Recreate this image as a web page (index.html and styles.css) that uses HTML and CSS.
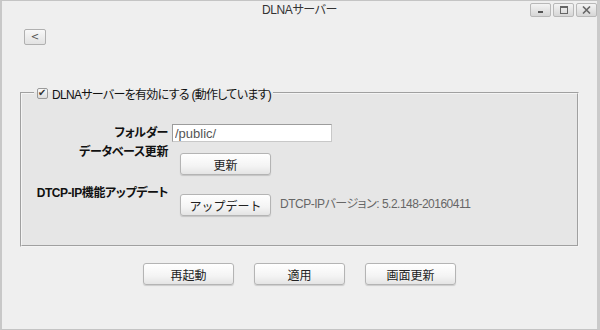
FILE: index.html
```html
<!DOCTYPE html>
<html lang="ja">
<head>
<meta charset="UTF-8">
<title>DLNAサーバー</title>
<link rel="stylesheet" href="styles.css">
</head>
<body>

<div class="window">
    <div class="titlebar">
        <span></span>
        <span class="title">DLNAサーバー</span>
        <div class="win-buttons">
            <button class="win-btn" title="最小化">
                <svg width="9" height="8" viewBox="0 0 9 8"><rect x="2" y="5" width="5" height="2" fill="#555"/></svg>
            </button>
            <button class="win-btn" title="最大化">
                <svg width="9" height="8" viewBox="0 0 9 8"><rect x="1.5" y="0.5" width="7" height="7" fill="none" stroke="#666"/><line x1="1.5" y1="1.5" x2="8.5" y2="1.5" stroke="#666"/></svg>
            </button>
            <button class="win-btn" title="閉じる">
                <svg width="9" height="8" viewBox="0 0 9 8"><path d="M1 0.5 L8 7.5 M8 0.5 L1 7.5" stroke="#666" stroke-width="1.6"/></svg>
            </button>
        </div>
    </div>

    <div class="toolbar">
        <button class="back-btn">&lt;</button>
    </div>

    <form class="content">
        <fieldset class="group">
            <legend>
                <label class="enable"><input type="checkbox" checked>DLNAサーバーを有効にする&nbsp;(動作しています)</label>
            </legend>

            <div class="row row-first">
                <span class="label">フォルダー</span>
                <input class="text-field" type="text" value="/public/">
            </div>
            <div class="row row-second">
                <span class="label">データベース更新</span>
                <button type="button" class="btn btn-low">更新</button>
            </div>
            <div class="row">
                <span class="label">DTCP-IP機能アップデート</span>
                <button type="button" class="btn btn-low">アップデート</button>
                <span class="version">DTCP-IPバージョン: 5.2.148-20160411</span>
            </div>
        </fieldset>

        <div class="actions">
            <button type="button" class="btn">再起動</button>
            <button type="button" class="btn">適用</button>
            <button type="button" class="btn">画面更新</button>
        </div>
    </form>
</div>

</body>
</html>
```

FILE: styles.css
```css
body {
    margin: 0;
    padding: 0;
    font-family: "Liberation Sans", "Noto Sans CJK JP", sans-serif;
    font-size: 12px;
    font-feature-settings: "palt";
    letter-spacing: -0.4px;
    color: #222;
}

.window {
    box-sizing: border-box;
    width: 600px;
    height: 330px;
    background: #efefef;
    border: 1px solid #c4c4c4;
    border-left: 2px solid #c8c8c8;
    border-right: 3px solid #cacaca;
}

.titlebar {
    display: grid;
    grid-template-columns: 1fr auto 1fr;
    align-items: start;
    height: 19px;
}

.title {
    line-height: 18px;
    color: #333;
}

.win-buttons {
    justify-self: end;
    display: flex;
    gap: 2px;
    margin-top: 2px;
}

.win-btn {
    width: 21px;
    height: 14px;
    padding: 0;
    border: 1px solid #b8b8b8;
    border-radius: 2px;
    background: linear-gradient(#f4f4f4, #d6d6d6);
    display: flex;
    align-items: center;
    justify-content: center;
}

.toolbar {
    padding: 9px 0 0 22px;
    height: 37px;
    box-sizing: border-box;
}

.back-btn {
    width: 22px;
    height: 16px;
    padding: 0;
    border: 1px solid #b0b0b0;
    border-radius: 2px;
    background: linear-gradient(#f8f8f8, #e2e2e2);
    font-family: "DejaVu Sans", sans-serif;
    font-size: 10px;
    line-height: 12px;
    color: #555;
}

.content {
    margin: 0;
    padding-top: 28px;
}

.group {
    margin: 0 18px;
    padding: 0 12px 29px 12px;
    border: 2px groove #f4f4f4;
    background: #e6e6e6;
}

.group legend {
    padding: 0 2px;
}

.enable {
    display: flex;
    align-items: center;
    height: 16px;
    color: #111;
    letter-spacing: -0.7px;
}

.enable input {
    appearance: none;
    width: 11px;
    height: 11px;
    margin: 0 4px 0 1px;
    border: 1px solid #9a9a9a;
    border-radius: 2px;
    background: linear-gradient(#fafafa, #dcdcdc);
    position: relative;
}

.enable input:checked::after {
    content: "✔";
    position: absolute;
    left: 0;
    top: -2px;
    font-family: "DejaVu Sans", sans-serif;
    font-size: 10px;
    color: #333;
}

.row {
    display: flex;
    align-items: flex-start;
    margin-top: 11px;
}

.row-first {
    margin-top: 23px;
    align-items: center;
}

.row-second {
    margin-top: 3px;
}

.label {
    width: 134px;
    text-align: right;
    white-space: nowrap;
    font-weight: bold;
    line-height: 14px;
    color: #111;
}

.text-field {
    margin: 0 0 0 4px;
    width: 160px;
    height: 18px;
    box-sizing: border-box;
    padding: 0 2px;
    border: 1px solid #9c9c9c;
    border-right-color: #c8c8c8;
    border-bottom-color: #c8c8c8;
    background: #fff;
    font-family: "Liberation Sans", sans-serif;
    font-size: 13px;
    letter-spacing: 0;
    color: #555;
}

.btn {
    width: 91px;
    height: 22px;
    padding: 0;
    border: 1px solid #b4b4b4;
    border-radius: 3px;
    background: linear-gradient(#ffffff, #f4f4f4 60%, #e4e4e4);
    box-shadow: 0 1px 1px rgba(0, 0, 0, 0.15);
    font-family: "Liberation Sans", "Noto Sans CJK JP", sans-serif;
    font-size: 12px;
    color: #222;
}

.btn-low {
    margin: 8px 0 0 12px;
}

.version {
    margin: 11px 0 0 9px;
    color: #666;
    line-height: 14px;
    letter-spacing: -0.5px;
}

.actions {
    display: flex;
    justify-content: center;
    gap: 20px;
    margin-top: 16px;
}
```
